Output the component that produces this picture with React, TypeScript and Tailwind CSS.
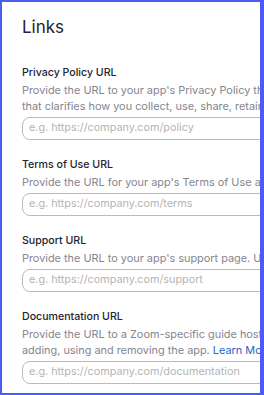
const sections = [
  {
    label: 'Privacy Policy URL',
    lines: [
      "Provide the URL to your app's Privacy Policy that explains",
      'that clarifies how you collect, use, share, retain and delete user data.',
    ],
    placeholder: 'e.g. https://company.com/policy',
  },
  {
    label: 'Terms of Use URL',
    lines: ["Provide the URL for your app's Terms of Use agreement."],
    placeholder: 'e.g. https://company.com/terms',
  },
  {
    label: 'Support URL',
    lines: ["Provide the URL to your app's support page. Users can reach you there."],
    placeholder: 'e.g. https://company.com/support',
  },
  {
    label: 'Documentation URL',
    lines: ['Provide the URL to a Zoom-specific guide hosted on your site about'],
    learnMoreLine: 'adding, using and removing the app. ',
    placeholder: 'e.g. https://company.com/documentation',
  },
];

export default function App() {
  return (
    <div
      className="w-[264px] h-[395px] overflow-hidden bg-white border-t-2 border-l-2 border-b-2 border-r-4 border-[#4b5cf2]"
      style={{ fontFamily: 'Inter, "Noto Sans", sans-serif' }}
    >
      <div className="w-[420px] pl-5 pt-[15px]">
        <h1 className="text-[17px] leading-[20px] text-[#232333]">Links</h1>

        <div className="mt-[28px] flex flex-col gap-[17px]">
          {sections.map((s) => (
            <div key={s.label}>
              <div className="text-[10.6px] leading-[16px] font-medium text-[#232333]">{s.label}</div>
              <div className="mt-[1px] text-[10.9px] leading-[16px] text-[#85858f] whitespace-nowrap">
                {s.lines.map((l) => (
                  <div key={l}>{l}</div>
                ))}
                {s.learnMoreLine && (
                  <div>
                    {s.learnMoreLine}
                    <span className="text-[#2a63c9]">Learn More</span>
                  </div>
                )}
              </div>
              <div className="mt-[3px] h-[23px] w-[400px] rounded-[8px] border border-[#bababa] flex items-center px-[6px]">
                <span className="text-[10.8px] text-[#b4b4b4]">{s.placeholder}</span>
              </div>
            </div>
          ))}
        </div>
      </div>
    </div>
  );
}
